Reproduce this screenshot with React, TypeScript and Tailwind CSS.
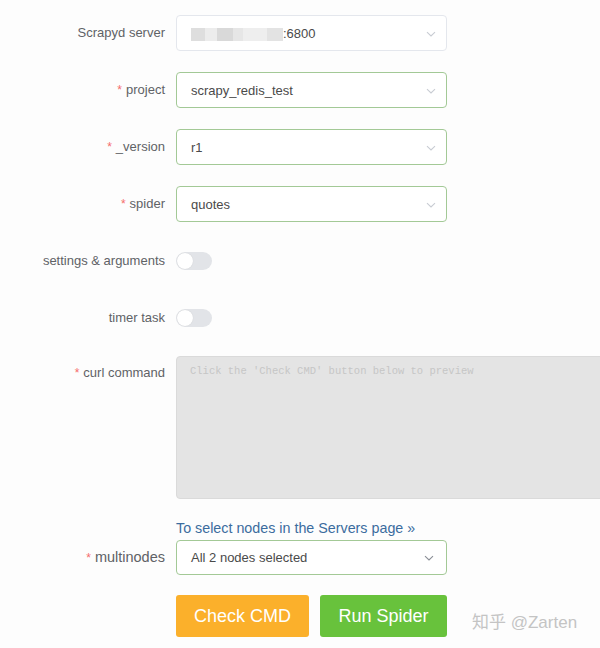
import React from 'react';

const FONT = { fontFamily: '"Liberation Sans", Arial, sans-serif' };

function Chevron({ dark }: { dark?: boolean }) {
  return (
    <svg
      className={dark ? 'h-[10px] w-[10px] text-[#8a8e96]' : 'h-[10px] w-[10px] text-[#c8ccd3]'}
      viewBox="0 0 10 10"
      fill="none"
      stroke="currentColor"
      strokeWidth={1.1}
    >
      <path d="M1 3.2 5 7 9 3.2" />
    </svg>
  );
}

function Label({ text, required, big }: { text: string; required?: boolean; big?: boolean }) {
  return (
    <div className={`w-[176px] shrink-0 pr-[11px] text-right text-[#606266] ${big ? 'text-[14.5px]' : 'text-[13px]'}`}>
      {required && <span className="mr-[4px] text-[12px] text-[#f56c6c]">*</span>}
      {text}
    </div>
  );
}

function Select({ children, active, dark }: { children: React.ReactNode; active?: boolean; dark?: boolean }) {
  return (
    <div
      className={`flex h-[36px] w-[271px] items-center justify-between rounded-[4px] border bg-white pl-[14px] pr-[10px] pt-[2px] text-[13px] text-[#4a4a4a] ${
        active ? 'border-[#a3c996]' : 'border-[#e4e7ed]'
      }`}
    >
      <div className="flex items-center">{children}</div>
      <Chevron dark={dark} />
    </div>
  );
}

function Switch() {
  return (
    <div className="flex h-[18px] w-[36px] items-center rounded-full bg-[#e2e4e8] p-[1px]">
      <div className="h-[16px] w-[16px] rounded-full bg-white shadow-[0_0_1px_rgba(0,0,0,0.15)]" />
    </div>
  );
}

export default function App() {
  return (
    <div className="relative h-[648px] w-[600px] overflow-hidden bg-[#fdfdfd]" style={FONT}>
      <div className="flex flex-col pt-[15px]">
        <div className="flex h-[36px] items-center">
          <Label text="Scrapyd server" />
          <Select>
            <div className="flex h-[13px] items-center">
              <div className="h-[13px] w-[14px] bg-[#dedede]" />
              <div className="h-[13px] w-[12px] bg-[#ececec]" />
              <div className="h-[13px] w-[16px] bg-[#d9d9d9]" />
              <div className="h-[13px] w-[10px] bg-[#e6e6e6]" />
              <div className="h-[13px] w-[24px] bg-[#eeeeee]" />
              <div className="h-[13px] w-[16px] bg-[#e3e3e3]" />
            </div>
            <span>:6800</span>
          </Select>
        </div>

        <div className="mt-[21px] flex h-[36px] items-center">
          <Label text="project" required />
          <Select active>scrapy_redis_test</Select>
        </div>

        <div className="mt-[21px] flex h-[36px] items-center">
          <Label text="_version" required />
          <Select active>r1</Select>
        </div>

        <div className="mt-[21px] flex h-[36px] items-center">
          <Label text="spider" required />
          <Select active>quotes</Select>
        </div>

        <div className="mt-[21px] flex h-[36px] items-center">
          <Label text="settings &amp; arguments" />
          <Switch />
        </div>

        <div className="mt-[21px] flex h-[36px] items-center">
          <Label text="timer task" />
          <Switch />
        </div>

        <div className="mt-[20px] flex items-start">
          <div className="pt-[7px]">
            <Label text="curl command" required />
          </div>
          <div className="h-[143px] w-[440px] shrink-0 rounded-[4px] border border-[#dadada] bg-[#e4e4e4] px-[13px] pt-[7px]">
            <div
              className="text-[10.5px] leading-[14px] text-[#c6c6c6]"
              style={{ fontFamily: '"Liberation Mono", "Courier New", monospace' }}
            >
              Click the 'Check CMD' button below to preview
            </div>
          </div>
        </div>

        <div className="mt-[20px] flex">
          <div className="w-[176px] shrink-0" />
          <span className="text-[14.3px] leading-[18px] text-[#3b6c9e]">To select nodes in the Servers page »</span>
        </div>

        <div className="mt-[3px] flex items-center">
          <Label text="multinodes" required big />
          <div className="flex h-[35px] w-[271px] items-center justify-between rounded-[4px] border border-[#a3c996] bg-white pl-[14px] pr-[12px] pt-[1px] text-[13px] text-[#4a4a4a]">
            <span>All 2 nodes selected</span>
            <Chevron dark />
          </div>
        </div>

        <div className="mt-[20px] flex items-center">
          <div className="w-[176px] shrink-0" />
          <button className="h-[42px] w-[133px] rounded-[3px] bg-[#fbb02b] text-[18px] text-white">Check CMD</button>
          <button className="ml-[11px] h-[42px] w-[127px] rounded-[3px] bg-[#68c23c] text-[18px] text-white">Run Spider</button>
        </div>
      </div>

      <div
        className="absolute left-[472px] top-[610px] text-[17px] text-[#c4c4c4]"
        style={{ fontFamily: '"Liberation Sans", "Noto Sans CJK SC", sans-serif' }}
      >
        知乎 @Zarten
      </div>
    </div>
  );
}
